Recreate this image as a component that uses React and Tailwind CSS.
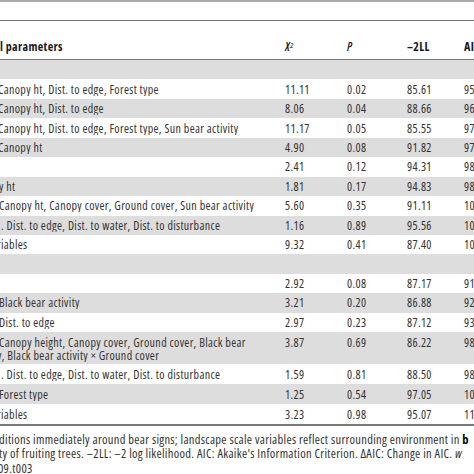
import React from 'react';

const rows = [
  { shade: true, text: '', ml: '', vals: ['', '', '', ''] },
  { text: 'Canopy ht, Dist. to edge, Forest type', ml: 'ml-[-2px]', vals: ['11.11', '0.02', '85.61', '95.'] },
  { shade: true, text: 'Canopy ht, Dist. to edge', ml: 'ml-[-2px]', vals: ['8.06', '0.04', '88.66', '96.'] },
  { text: 'Canopy ht, Dist. to edge, Forest type, Sun bear activity', ml: 'ml-[-2px]', vals: ['11.17', '0.05', '85.55', '97.'] },
  { shade: true, text: 'Canopy ht', ml: 'ml-[-2px]', vals: ['4.90', '0.08', '91.82', '97.'] },
  { text: '', ml: '', vals: ['2.41', '0.12', '94.31', '98.'] },
  { shade: true, text: 'y ht', ml: 'ml-[-1px]', vals: ['1.81', '0.17', '94.83', '98.'] },
  { text: 'Canopy ht, Canopy cover, Ground cover, Sun bear activity', ml: 'ml-[-1px]', vals: ['5.60', '0.35', '91.11', '10'] },
  { shade: true, text: '. Dist. to edge, Dist. to water, Dist. to disturbance', ml: 'ml-[1px]', vals: ['1.16', '0.89', '95.56', '10'] },
  { text: 'riables', ml: 'ml-[-3px]', vals: ['9.32', '0.41', '87.40', '10'] },
  { shade: true, text: '', ml: '', vals: ['', '', '', ''] },
  { text: '', ml: '', vals: ['2.92', '0.08', '87.17', '91.'] },
  { shade: true, text: 'Black bear activity', ml: 'ml-[-1px]', vals: ['3.21', '0.20', '86.88', '92.'] },
  { text: 'Dist. to edge', ml: 'ml-[-1px]', vals: ['2.97', '0.23', '87.12', '93.'] },
];

const tail = [
  { text: '. Dist. to edge, Dist. to water, Dist. to disturbance', ml: 'ml-[1px]', vals: ['1.59', '0.81', '88.50', '98.'] },
  { shade: true, text: 'Forest type', ml: 'ml-[-1px]', vals: ['1.25', '0.54', '97.05', '10'] },
  { text: 'riables', ml: 'ml-[-3px]', vals: ['3.23', '0.98', '95.07', '11.'] },
];

const Cells = ({ vals }) => (
  <>
    <div className="w-[62px] shrink-0">{vals[0]}</div>
    <div className="w-[60px] shrink-0">{vals[1]}</div>
    <div className="w-[57px] shrink-0">{vals[2]}</div>
    <div className="flex-1 whitespace-nowrap">{vals[3]}</div>
  </>
);

const Row = ({ row, h }) => (
  <div className={`flex items-center ${h} ${row.shade ? 'bg-[#dddddd]' : 'bg-white'}`}>
    <div className="w-[285px] shrink-0 overflow-hidden whitespace-nowrap">
      <span className={`inline-block ${row.ml}`}>{row.text}</span>
    </div>
    <Cells vals={row.vals} />
  </div>
);

const App = () => {
  return (
    <div className="w-[474px] h-[474px] overflow-hidden bg-white text-[12px] leading-[13px] tracking-[0.35px] text-[#333333] font-stretch-semi-condensed font-['Open_Sans',sans-serif]">
      <div className="h-[2px] bg-[#a9a9a9]" />
      <div className="h-[18px]" />
      <div className="h-px bg-[#6f6f6f]" />

      {/* header */}
      <div className="flex items-end h-[39px] pb-[6px] border-b border-[#7a7a7a] text-[#1a1a1a]">
        <div className="w-[285px] shrink-0 font-bold whitespace-nowrap">
          <span className="ml-[0px]">l parameters</span>
        </div>
        <div className="w-[62px] shrink-0 italic font-semibold">
          X<sup className="text-[7px]">2</sup>
        </div>
        <div className="w-[60px] shrink-0 italic font-semibold">P</div>
        <div className="w-[57px] shrink-0 font-bold">–2LL</div>
        <div className="flex-1 font-bold whitespace-nowrap">AI</div>
      </div>

      {rows.map((r, i) => (
        <Row key={i} row={r} h="h-[19.45px]" />
      ))}

      {/* two line row */}
      <div className="flex items-start h-[32px] pt-[4px] bg-[#dddddd]">
        <div className="w-[285px] shrink-0 overflow-hidden whitespace-nowrap">
          <div className="ml-[-1px]">Canopy height, Canopy cover, Ground cover, Black bear</div>
          <div className="ml-[-3px]">y, Black bear activity × Ground cover</div>
        </div>
        <Cells vals={['3.87', '0.69', '86.22', '98.']} />
      </div>

      {tail.map((r, i) => (
        <Row key={i} row={r} h="h-[20px]" />
      ))}

      <div className="h-[1.5px] bg-[#7a7a7a]" />

      {/* footnote */}
      <div className="pt-[7px] text-[12.5px] leading-[14.5px] tracking-[0.3px] whitespace-nowrap">
        <div className="ml-[-1px]">
          ditions immediately around bear signs; landscape scale variables reflect surrounding environment in <b className="text-black">b</b>
        </div>
        <div className="ml-[-1px]">
          ty of fruiting trees. –2LL: –2 log likelihood. AIC: Akaike's Information Criterion. ΔAIC: Change in AIC. <i>w</i>
        </div>
        <div className="ml-[-2px]">09.t003</div>
      </div>
    </div>
  );
};

export default App;
